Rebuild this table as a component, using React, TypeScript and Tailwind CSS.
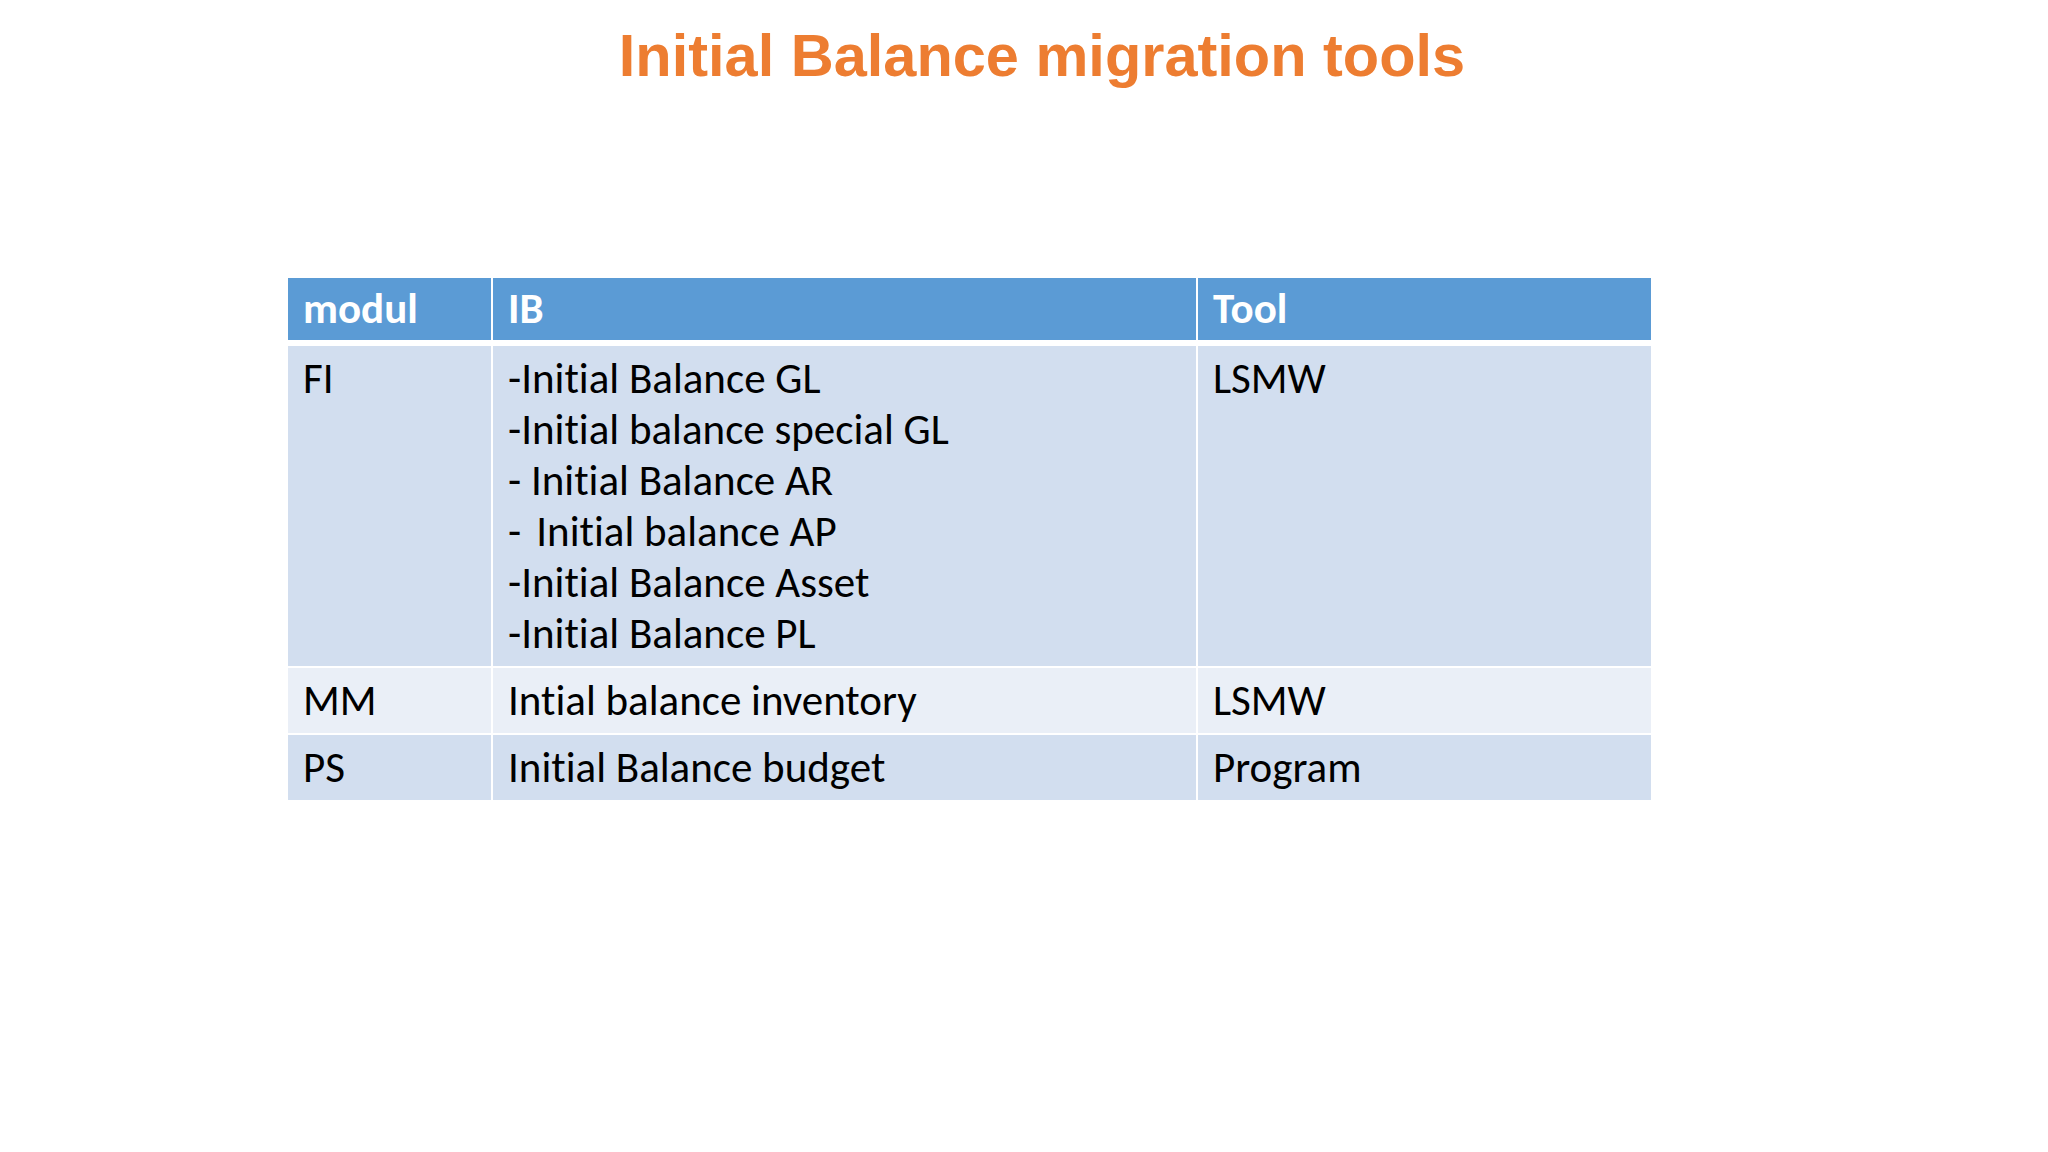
const rows = [
  {
    modul: 'FI',
    ib: [
      '-Initial Balance GL',
      '-Initial balance special GL',
      '- Initial Balance AR',
      '- \u200aInitial balance AP',
      '-Initial Balance Asset',
      '-Initial Balance PL',
    ],
    tool: 'LSMW',
    bg: 'bg-[#d2deef]',
  },
  { modul: 'MM', ib: ['Intial balance inventory'], tool: 'LSMW', bg: 'bg-[#eaeff7]' },
  { modul: 'PS', ib: ['Initial Balance budget'], tool: 'Program', bg: 'bg-[#d2deef]' },
];

const cell = 'pl-[15px] py-[7px] leading-[51px] whitespace-pre';

const App = () => {
  return (
    <div className="w-[2048px] h-[1152px] bg-white overflow-hidden">
      <h1 className="pt-[26px] pl-[36px] text-center text-[59.5px] leading-[60px] font-bold text-[#ed7d31] font-['Liberation_Sans',Arial,sans-serif]">
        Initial Balance migration tools
      </h1>

      <div className="ml-[288px] mt-[192px] w-[1363px] font-['Carlito','Calibri','Lato',sans-serif] text-[43px] text-black [font-variant-ligatures:none]">
        <div className="grid grid-cols-[203px_703px_453px] gap-x-[2px] bg-white">
          <div className="bg-[#5b9bd5] text-white font-bold pl-[15px] py-[5px] leading-[52px]">modul</div>
          <div className="bg-[#5b9bd5] text-white font-bold pl-[15px] py-[5px] leading-[52px]">IB</div>
          <div className="bg-[#5b9bd5] text-white font-bold pl-[15px] py-[5px] leading-[52px]">Tool</div>
        </div>

        <div className="mt-[6px] flex flex-col gap-y-[2px]">
          {rows.map((r) => (
            <div key={r.modul} className="grid grid-cols-[203px_703px_453px] gap-x-[2px]">
              <div className={`${r.bg} ${cell}`}>{r.modul}</div>
              <div className={`${r.bg} ${cell}`}>
                {r.ib.map((line) => (
                  <div key={line}>{line}</div>
                ))}
              </div>
              <div className={`${r.bg} ${cell}`}>{r.tool}</div>
            </div>
          ))}
        </div>
      </div>
    </div>
  );
};

export default App;
